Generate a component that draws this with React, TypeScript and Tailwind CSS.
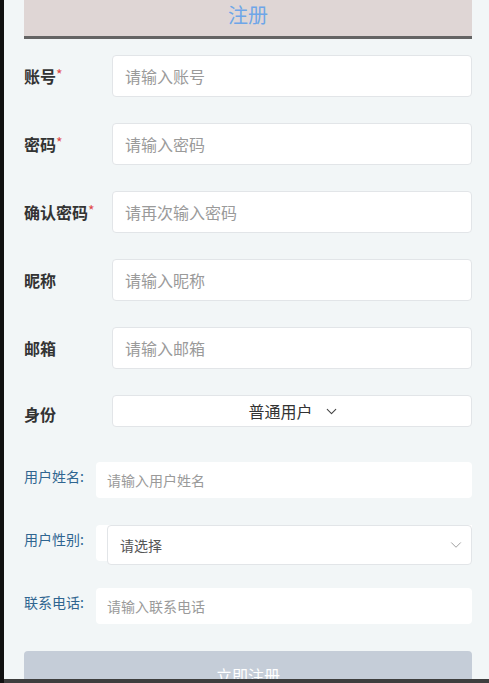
import { ChevronDown } from "lucide-react";

const font = { fontFamily: '"Noto Sans CJK SC", "Noto Sans", sans-serif' };

const mainFields = [
	{ label: "账号", placeholder: "请输入账号", required: true },
	{ label: "密码", placeholder: "请输入密码", required: true },
	{ label: "确认密码", placeholder: "请再次输入密码", required: true },
	{ label: "昵称", placeholder: "请输入昵称", required: false },
	{ label: "邮箱", placeholder: "请输入邮箱", required: false },
];

function MainRow({ label, placeholder, required }: { label: string; placeholder: string; required: boolean }) {
	return (
		<div className="flex items-center h-[42px]">
			<div className="w-[88px] shrink-0 text-[16px] font-bold text-[#333]">
				{label}
				{required && <span className="text-[#e04848] text-[14px] align-top font-normal">*</span>}
			</div>
			<input
				placeholder={placeholder}
				className="flex-1 h-[42px] bg-white border border-[#e2e5e8] rounded-[4px] px-3 text-[16px] text-[#333] placeholder:text-[#9a9a9a] outline-none"
				style={font}
			/>
		</div>
	);
}

function SmallRow({ label, placeholder }: { label: string; placeholder: string }) {
	return (
		<div className="flex items-start h-[36px]">
			<div className="w-[72px] shrink-0 pt-[4px] text-[14px] text-[#2f6590]">{label}:</div>
			<input
				placeholder={placeholder}
				className="flex-1 h-[36px] bg-white rounded-[4px] px-[11px] text-[14px] text-[#333] placeholder:text-[#9a9a9a] outline-none"
				style={font}
			/>
		</div>
	);
}

export default function App() {
	return (
		<div className="relative h-[683px] w-full overflow-hidden bg-[#f2f6f7] border-l-4 border-[#111]" style={font}>
			<div className="pl-[20px] pr-[17px]">
				<div className="h-[39px] bg-[#dfd6d5] border-b-[3px] border-[#646464] flex items-start justify-center">
					<span className="text-[20px] leading-[30px] text-[#6ea6e8]">注册</span>
				</div>

				<div className="mt-4 flex flex-col gap-[26px]">
					{mainFields.map((f) => (
						<MainRow key={f.label} {...f} />
					))}
					<div className="flex items-center h-[32px]">
						<div className="w-[88px] shrink-0 pt-[6px] text-[16px] font-bold text-[#333]">身份</div>
						<div className="flex-1 h-[32px] bg-white border border-[#e2e5e8] rounded-[4px] flex items-center justify-center gap-[10px] text-[16px] text-[#333]">
							<span className="pl-[4px]">普通用户</span>
							<ChevronDown size={17} strokeWidth={1.5} className="text-[#444]" />
						</div>
					</div>
				</div>

				<div className="mt-[35px] flex flex-col gap-[27px]">
					<SmallRow label="用户姓名" placeholder="请输入用户姓名" />
					<div className="flex items-start h-[36px]">
						<div className="w-[72px] shrink-0 pt-[4px] text-[14px] text-[#2f6590]">用户性别:</div>
						<div className="flex-1 h-[36px] bg-white rounded-l-[4px] pl-[11px]">
							<div className="h-[40px] bg-white border border-[#e2e5e8] rounded-[4px] flex items-center justify-between pl-[12px] pr-[6px] text-[14px] text-[#555]">
								<span>请选择</span>
								<ChevronDown size={18} strokeWidth={1.25} className="text-[#999]" />
							</div>
						</div>
					</div>
					<SmallRow label="联系电话" placeholder="请输入联系电话" />
				</div>

				<button className="mt-[27px] w-full h-[44px] bg-[#c5cdd8] rounded-[4px] text-[16px] text-white pt-[4px]">
					立即注册
				</button>
			</div>
			<div className="absolute left-0 right-0 bottom-0 h-[4px] bg-[#3e3e3e]" />
		</div>
	);
}
